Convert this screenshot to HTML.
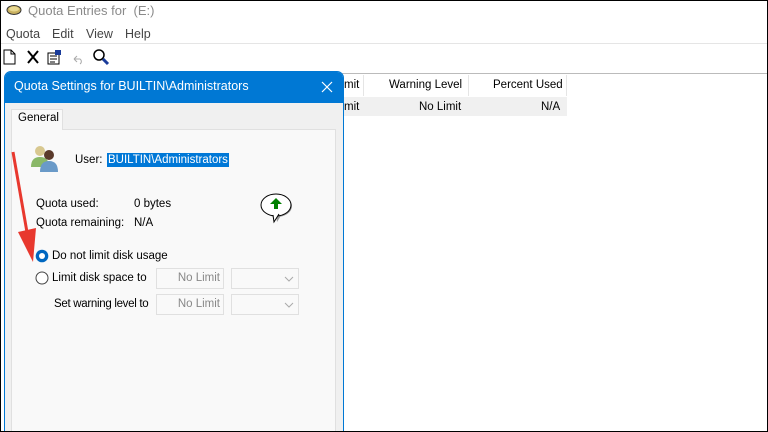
<!DOCTYPE html>
<html><head><style>
*{margin:0;padding:0;box-sizing:border-box}
html,body{width:768px;height:432px;overflow:hidden}
body{background:#fff;font-family:"Liberation Sans",sans-serif;font-size:11.5px;color:#000;position:relative}
.abs{position:absolute;white-space:nowrap}
</style></head><body>
<!-- title -->
<svg class="abs" style="left:6px;top:4px" width="16" height="12"><ellipse cx="8" cy="6" rx="7" ry="4.5" fill="#c8b060" stroke="#333"/><ellipse cx="8" cy="5" rx="5" ry="2.5" fill="#e8d890"/></svg>
<div class="abs" style="left:28px;top:3px;font-size:13px;color:#8a8a8a">Quota Entries for&nbsp; (E:)</div>
<div class="abs" style="left:0;top:24px;width:768px;height:20px;background:#fff;border-bottom:1px solid #e5e5e5"></div>
<div class="abs" style="left:6px;top:27px;font-size:12.5px;color:#444">Quota</div>
<div class="abs" style="left:52px;top:27px;font-size:12.5px;color:#444">Edit</div>
<div class="abs" style="left:86px;top:27px;font-size:12.5px;color:#444">View</div>
<div class="abs" style="left:125px;top:27px;font-size:12.5px;color:#444">Help</div>
<!-- toolbar -->
<svg class="abs" style="left:2px;top:48px" width="120" height="18">
<path d="M2 2h7l4 4v10H2z" fill="#fff" stroke="#000"/><path d="M9 2v4h4" fill="none" stroke="#000"/>
<path d="M26 3l10 12M36 3L26 15" stroke="#000" stroke-width="2"/>
<rect x="46" y="5" width="11" height="11" fill="#fff" stroke="#000"/><path d="M48 8h7M48 11h7M48 14h5" stroke="#000"/><rect x="53" y="2" width="6" height="5" fill="#1a3c9a"/>
<path d="M72 11l3-3M72 11l3 3M72 11h6a3 3 0 0 1 0 5" fill="none" stroke="#aaa"/>
<circle cx="97" cy="7" r="5" fill="#fff" stroke="#000" stroke-width="1.5"/><path d="M101 11l5 5" stroke="#1a3c9a" stroke-width="3"/>
</svg>
<!-- list -->
<div class="abs" style="left:340px;top:73px;width:428px;height:1px;background:#bbb"></div>
<div class="abs" style="left:340px;top:74px;width:227px;height:22px;background:#fff"></div>
<div class="abs" style="left:344px;top:79px">mit</div>
<div class="abs" style="left:363px;top:75px;width:1px;height:21px;background:#e5e5e5"></div>
<div class="abs" style="left:389px;top:79px">Warning Level</div>
<div class="abs" style="left:468px;top:75px;width:1px;height:21px;background:#e5e5e5"></div>
<div class="abs" style="left:493px;top:79px">Percent Used</div>
<div class="abs" style="left:566px;top:75px;width:1px;height:21px;background:#e5e5e5"></div>
<div class="abs" style="left:340px;top:97px;width:227px;height:19px;background:#f0f0f0"></div>
<div class="abs" style="left:344px;top:101px">mit</div>
<div class="abs" style="left:419px;top:101px">No Limit</div>
<div class="abs" style="left:541px;top:101px">N/A</div>
<!-- dialog -->
<div class="abs" style="left:4px;top:71px;width:340px;height:370px;background:#f0f0f0;border:1px solid #0078d4;border-radius:7px 7px 0 0;overflow:hidden">
<div style="position:absolute;left:0;top:0;width:340px;height:31px;background:#0078d4"></div>
</div>
<div class="abs" style="left:14px;top:79px;color:#fff;font-size:12.5px">Quota Settings for BUILTIN\Administrators</div>
<svg class="abs" style="left:320px;top:80px" width="14" height="14"><path d="M2 2l10 10M12 2L2 12" stroke="#fff" stroke-width="1.2"/></svg>
<div class="abs" style="left:11px;top:129px;width:325px;height:310px;background:#f9f9f9;border:1px solid #e0e0e0"></div>
<div class="abs" style="left:11px;top:109px;width:52px;height:21px;background:#f9f9f9;border:1px solid #e0e0e0;border-bottom:none"></div>
<div class="abs" style="left:18px;top:112px">General</div>
<svg class="abs" style="left:28px;top:143px" width="34" height="30">
<circle cx="12" cy="8" r="5" fill="#d8c890"/><path d="M3 24q0-10 9-10t9 10z" fill="#8ab868"/>
<circle cx="21" cy="12" r="5" fill="#5a3a2a"/><path d="M12 29q0-11 9-11t9 11z" fill="#6a9ac8"/>
</svg>
<div class="abs" style="left:75px;top:154px">User:</div>
<div class="abs" style="left:107px;top:153px;background:#0078d7;color:#fff;padding:1px 1px">BUILTIN\Administrators</div>
<div class="abs" style="left:36px;top:198px">Quota used:</div>
<div class="abs" style="left:134px;top:198px">0 bytes</div>
<div class="abs" style="left:36px;top:217px">Quota remaining:</div>
<div class="abs" style="left:134px;top:217px">N/A</div>
<svg class="abs" style="left:258px;top:192px" width="36" height="32">
<ellipse cx="19" cy="14" rx="15" ry="11" fill="#999"/>
<path d="M18 22l1 8 5-8" fill="#999"/>
<ellipse cx="18" cy="13" rx="15" ry="11" fill="#fff" stroke="#000"/>
<path d="M15 23l1 7 5-8" fill="#fff" stroke="#000"/>
<path d="M18 6l-6 6h4v5h4v-5h4z" fill="#008000"/>
</svg>
<svg class="abs" style="left:35px;top:249px" width="14" height="14"><circle cx="7" cy="7" r="6.3" fill="#0067c0"/><circle cx="7" cy="7" r="3" fill="#fff"/></svg>
<div class="abs" style="left:52px;top:250px">Do not limit disk usage</div>
<svg class="abs" style="left:35px;top:271px" width="14" height="14"><circle cx="7" cy="7" r="6" fill="#fff" stroke="#444"/></svg>
<div class="abs" style="left:52px;top:272px">Limit disk space to</div>
<div class="abs" style="left:156px;top:268px;width:68px;height:21px;border:1px solid #e0e0e0;background:#f9f9f9;text-align:right;padding:3px 3px;color:#888">No Limit</div>
<div class="abs" style="left:231px;top:268px;width:68px;height:21px;border:1px solid #e0e0e0;background:#f9f9f9"></div>
<svg class="abs" style="left:284px;top:276px" width="10" height="6"><path d="M1 1l4 4 4-4" fill="none" stroke="#aaa"/></svg>
<div class="abs" style="left:54px;top:298px;letter-spacing:-0.3px">Set warning level to</div>
<div class="abs" style="left:156px;top:294px;width:68px;height:21px;border:1px solid #e0e0e0;background:#f9f9f9;text-align:right;padding:3px 3px;color:#888">No Limit</div>
<div class="abs" style="left:231px;top:294px;width:68px;height:21px;border:1px solid #e0e0e0;background:#f9f9f9"></div>
<svg class="abs" style="left:284px;top:302px" width="10" height="6"><path d="M1 1l4 4 4-4" fill="none" stroke="#aaa"/></svg>
<!-- red arrow -->
<svg class="abs" style="left:0;top:150px" width="50" height="115"><path d="M13 2L28 88" stroke="#e8382e" stroke-width="3"/><path d="M18 82l15 30 3-34z" fill="#e8382e"/></svg>
<div class="abs" style="left:0;top:0;width:768px;height:432px;border:1px solid #000"></div>
</body></html>
